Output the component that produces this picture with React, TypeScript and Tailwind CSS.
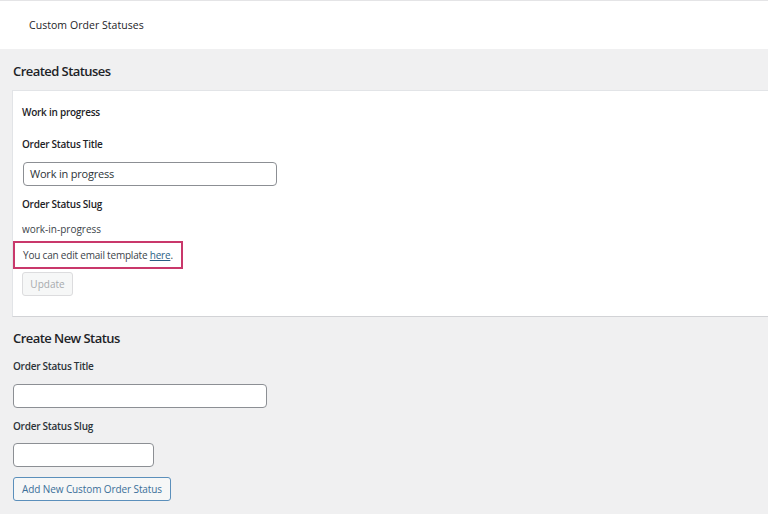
import React from "react";

export default function App() {
  return (
    <div
      className="w-[768px] h-[514px] overflow-hidden bg-[#f0f0f1] text-[#1d2327]"
      style={{ fontFamily: '"Open Sans", "Noto Sans", sans-serif' }}
    >
      <div className="h-[49px] bg-white border-t border-[#e4e4e6] flex items-center pl-[29px]">
        <span className="text-[10.5px] tracking-[0.05px] text-[#1d2327] pt-[1px]">Custom Order Statuses</span>
      </div>

      <div className="pl-[13px] pt-[13px]">
        <h2 className="text-[13px] font-semibold tracking-[-0.55px] leading-[18px]">Created Statuses</h2>
      </div>

      <div className="ml-[12px] mt-[10px] bg-white border border-[#e2e4e7] border-r-0 border-b-[#d2d3d6] h-[227px] pl-[9px] pt-[14px]">
        <div className="text-[10px] font-semibold tracking-[-0.25px] leading-[14px]">Work in progress</div>
        <div className="text-[10px] font-semibold tracking-[-0.25px] leading-[14px] mt-[18px]">Order Status Title</div>
        <div className="mt-[11px] ml-[1px] w-[254px] h-[24px] border border-[#8c8f94] rounded-[4px] flex items-center pl-[6px] text-[11px] tracking-[-0.2px] text-[#2c3338]">
          Work in progress
        </div>
        <div className="text-[10px] font-semibold tracking-[-0.25px] leading-[14px] mt-[11px]">Order Status Slug</div>
        <div className="text-[10px] text-[#3c434a] leading-[14px] mt-[11px]">work-in-progress</div>
        <div className="-ml-[9px] mt-[5px] w-[170px] h-[28px] border-2 border-[#c9386b] flex items-center pl-[8px] text-[10px] tracking-[-0.2px] text-[#3c434a] whitespace-nowrap">
          <span>
            You can edit email template{" "}
            <a className="underline text-[#2a5f86]">here</a>.
          </span>
        </div>
        <div className="mt-[3px] w-[51px] h-[24px] border border-[#dcdcde] bg-[#f6f7f7] rounded-[3px] flex items-center justify-center text-[10px] text-[#a7aaad]">
          Update
        </div>
      </div>

      <div className="pl-[13px]">
        <h2 className="text-[13px] font-semibold tracking-[-0.55px] leading-[18px] mt-[12px]">Create New Status</h2>
        <div className="text-[10px] font-semibold tracking-[-0.25px] leading-[14px] mt-[12px] text-[#2c3338]">Order Status Title</div>
        <div className="mt-[11px] w-[254px] h-[24px] border border-[#8c8f94] rounded-[4px] bg-white" />
        <div className="text-[10px] font-semibold tracking-[-0.25px] leading-[14px] mt-[11px] text-[#2c3338]">Order Status Slug</div>
        <div className="mt-[10px] w-[141px] h-[24px] border border-[#8c8f94] rounded-[4px] bg-white" />
        <div className="mt-[10px] w-[158px] h-[24px] border border-[#5b8fbb] rounded-[3px] bg-[#f6f7f7] flex items-center justify-center text-[10px] tracking-[-0.1px] text-[#3b6f99]">
          Add New Custom Order Status
        </div>
      </div>
    </div>
  );
}
